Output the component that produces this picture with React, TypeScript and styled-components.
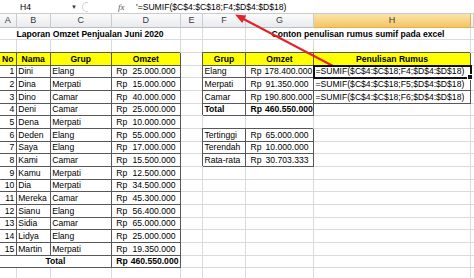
import styled, { createGlobalStyle, css } from 'styled-components';

const GRID = '#d8dadc';
const LINE = '#585858';
const FONT = '"Liberation Sans", Arial, sans-serif';
const COLUMNS = '16.7px 34px 61px 69.3px 22px 43px 68px 157px 1fr';
const LETTERS = ['A', 'B', 'C', 'D', 'E', 'F', 'G', 'H', ''];

type Align = 'left' | 'center' | 'right' | 'between';

type Spec = {
  text?: string;
  money?: string;
  span?: number;
  bold?: boolean;
  align?: Align;
  fill?: boolean;
  box?: boolean;
  selected?: boolean;
};

const people: [number, string, string, string][] = [
  [1, 'Dini', 'Elang', '25.000.000'],
  [2, 'Dina', 'Merpati', '15.000.000'],
  [3, 'Dino', 'Camar', '40.000.000'],
  [4, 'Deni', 'Camar', '25.000.000'],
  [5, 'Dena', 'Merpati', '10.000.000'],
  [6, 'Deden', 'Elang', '55.000.000'],
  [7, 'Saya', 'Elang', '17.000.000'],
  [8, 'Kami', 'Camar', '15.500.000'],
  [9, 'Kamu', 'Merpati', '12.500.000'],
  [10, 'Dia', 'Merpati', '34.500.000'],
  [11, 'Mereka', 'Camar', '45.300.000'],
  [12, 'Sianu', 'Elang', '56.400.000'],
  [13, 'Sidia', 'Camar', '65.000.000'],
  [14, 'Lidya', 'Elang', '25.000.000'],
  [15, 'Martin', 'Merpati', '19.350.000'],
];

const formula = (row: number) => `=SUMIF($C$4:$C$18;F${row};$D$4:$D$18)`;

// right hand table, one entry per sheet row 4..18 (columns F, G, H)
const summary: Spec[][] = [
  [{ text: 'Elang', box: true }, { money: '178.400.000', box: true }, { text: formula(4), box: true, selected: true }],
  [{ text: 'Merpati', box: true }, { money: '91.350.000', box: true }, { text: formula(5), box: true }],
  [{ text: 'Camar', box: true }, { money: '190.800.000', box: true }, { text: formula(6), box: true }],
  [{ text: 'Total', bold: true, box: true }, { money: '460.550.000', bold: true, box: true }, {}],
  [{}, {}, {}],
  [{ text: 'Tertinggi', box: true }, { money: '65.000.000', box: true }, {}],
  [{ text: 'Terendah', box: true }, { money: '10.000.000', box: true }, {}],
  [{ text: 'Rata-rata', box: true }, { money: '30.703.333', box: true }, {}],
];

const blank = (n: number): Spec[] => Array.from({ length: n }, () => ({}));
const head = (text: string): Spec => ({ text, bold: true, align: 'center', fill: true, box: true });

const rows: Spec[][] = [
  [
    { text: 'Laporan Omzet Penjualan Juni 2020', span: 4, bold: true, align: 'center' },
    {},
    {},
    { text: 'Conton penulisan rumus sumif pada excel', span: 2, bold: true, align: 'center' },
    {},
  ],
  blank(9),
  [head('No'), head('Nama'), head('Grup'), head('Omzet'), {}, head('Grup'), head('Omzet'), head('Penulisan Rumus'), {}],
  ...people.map(([no, name, group, value], i): Spec[] => [
    { text: String(no), align: 'right', box: true },
    { text: name, box: true },
    { text: group, box: true },
    { money: value, box: true },
    {},
    ...(summary[i] ?? blank(3)),
    {},
  ]),
  [
    { text: 'Total', span: 3, bold: true, align: 'center', box: true },
    { money: '460.550.000', bold: true, box: true },
    ...blank(5),
  ],
  blank(9),
];

const GlobalStyle = createGlobalStyle`
  body {
    margin: 0;
    background: #fff;
    font-family: ${FONT};
    overflow: hidden;
  }
`;

const Window = styled.div`
  position: relative;
  width: 474px;
  height: 278px;
  overflow: hidden;
  background: #fff;
`;

const FormulaBar = styled.div`
  display: flex;
  align-items: center;
  height: 14px;
  box-sizing: border-box;
  border-bottom: 1px solid #c9ccd1;
  font-size: 8.6px;
  color: #000;
`;

const NameBox = styled.div`
  display: flex;
  align-items: center;
  justify-content: space-between;
  width: 80px;
  height: 100%;
  box-sizing: border-box;
  padding: 0 3px 0 20px;
`;

const Caret = styled.span`
  font-size: 6px;
  color: #333;
`;

const Grip = styled.div`
  width: 6px;
  height: 10px;
  margin-left: 2px;
  box-sizing: border-box;
  border: 1px solid #cfd3d8;
  border-right: none;
  border-radius: 5px 0 0 5px;
`;

const Fx = styled.span`
  width: 18px;
  margin-left: 30px;
  font-family: 'Liberation Serif', serif;
  font-style: italic;
  font-size: 9px;
  color: #555;
`;

const FormulaText = styled.div`
  flex: 1;
  white-space: nowrap;
`;

const HeaderRow = styled.div`
  display: grid;
  grid-template-columns: ${COLUMNS};
  height: 13.7px;
`;

const HeaderCell = styled.div<{ $active?: boolean }>`
  display: flex;
  align-items: center;
  justify-content: center;
  box-sizing: border-box;
  border-right: 1px solid ${(p) => (p.$active ? '#e0b055' : '#c9ccd0')};
  border-bottom: 1px solid ${(p) => (p.$active ? '#e0b055' : '#babec4')};
  background: ${(p) =>
    p.$active ? 'linear-gradient(#fbe5ab, #f5c462)' : 'linear-gradient(#fbfbfb, #e8eaed)'};
  color: #3a3a3a;
  font-size: 9px;
`;

const Grid = styled.div`
  display: grid;
  grid-template-columns: ${COLUMNS};
  grid-auto-rows: 12.67px;
`;

const justify: Record<Align, string> = {
  left: 'flex-start',
  center: 'center',
  right: 'flex-end',
  between: 'space-between',
};

const Cell = styled.div<{
  $span: number;
  $bold?: boolean;
  $align: Align;
  $fill?: boolean;
  $box?: boolean;
  $selected?: boolean;
}>`
  position: relative;
  grid-column: span ${(p) => p.$span};
  display: flex;
  align-items: center;
  justify-content: ${(p) => justify[p.$align]};
  gap: 3px;
  min-width: 0;
  box-sizing: border-box;
  padding: 0 ${(p) => (p.$align === 'between' ? '4.5px' : '1.5px')};
  border-right: 1px solid ${(p) => (p.$box ? LINE : GRID)};
  border-bottom: 1px solid ${(p) => (p.$box ? LINE : GRID)};
  box-shadow: ${(p) => (p.$box ? `-1px -1px 0 ${LINE}` : 'none')};
  background: ${(p) => (p.$fill ? '#ffff00' : '#fff')};
  font-size: 8.6px;
  font-weight: ${(p) => (p.$bold ? 700 : 400)};
  color: #000;
  white-space: nowrap;

  ${(p) =>
    p.$selected &&
    css`
      z-index: 1;
      outline: 2px solid #111;
      outline-offset: -1px;

      &::after {
        content: '';
        position: absolute;
        right: -3px;
        bottom: -3px;
        width: 4px;
        height: 4px;
        background: #111;
        border: 1px solid #fff;
      }
    `}
`;

const Arrow = styled.svg`
  position: absolute;
  left: 0;
  top: 0;
  pointer-events: none;
`;

const SheetCell = ({ spec }: { spec: Spec }) => (
  <Cell
    $span={spec.span ?? 1}
    $bold={spec.bold}
    $align={spec.money ? 'between' : spec.align ?? 'left'}
    $fill={spec.fill}
    $box={spec.box}
    $selected={spec.selected}
  >
    {spec.money ? (
      <>
        <span>Rp</span>
        <span>{spec.money}</span>
      </>
    ) : (
      spec.text
    )}
  </Cell>
);

const App = () => (
  <Window>
    <GlobalStyle />
    <FormulaBar>
      <NameBox>
        H4
        <Caret>▼</Caret>
      </NameBox>
      <Grip />
      <Fx>fx</Fx>
      <FormulaText>'{formula(4)}</FormulaText>
    </FormulaBar>
    <HeaderRow>
      {LETTERS.map((letter, i) => (
        <HeaderCell key={i} $active={letter === 'H'}>
          {letter}
        </HeaderCell>
      ))}
    </HeaderRow>
    <Grid>
      {rows.map((row, r) => row.map((spec, c) => <SheetCell key={`${r}-${c}`} spec={spec} />))}
    </Grid>
    <Arrow width="474" height="278" viewBox="0 0 474 278">
      <line x1="333" y1="66" x2="243.5" y2="19" stroke="#e2232a" strokeWidth="2" />
      <polygon points="235,14.5 246.2,15.6 242.2,23" fill="#e2232a" />
    </Arrow>
  </Window>
);

export default App;
